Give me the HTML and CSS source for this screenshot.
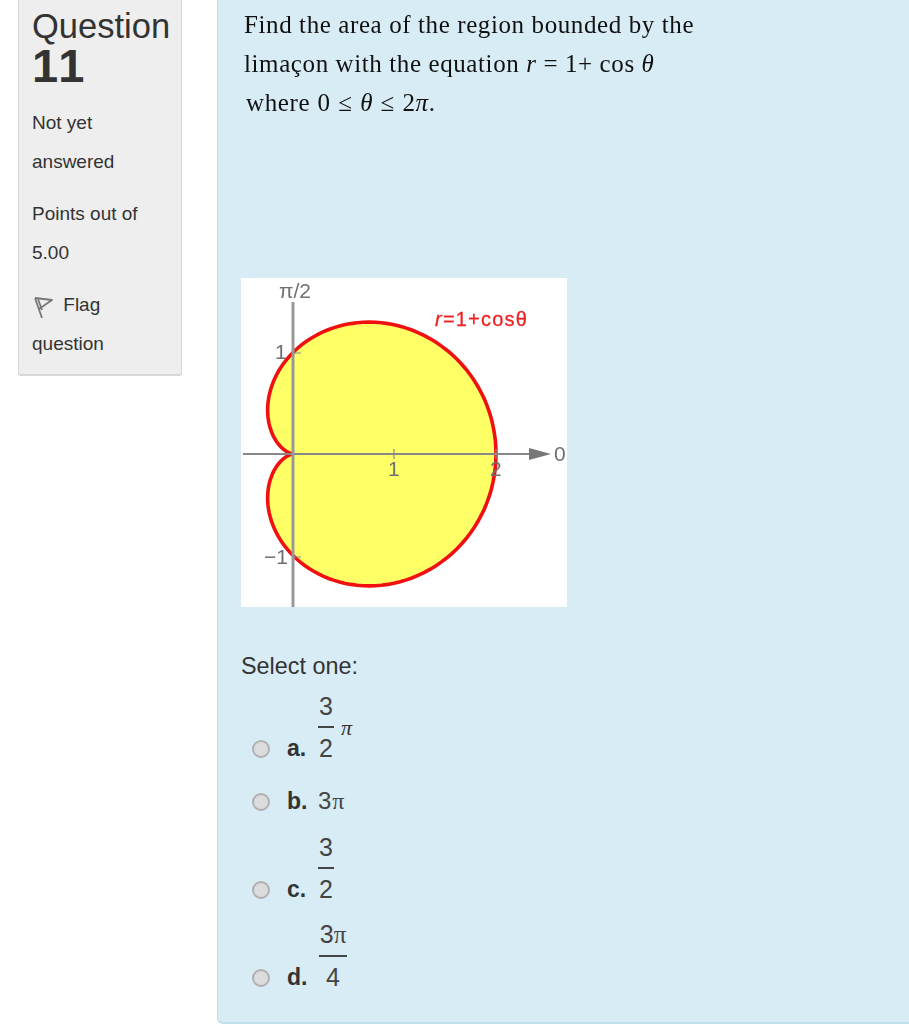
FILE: index.html
```html
<!DOCTYPE html>
<html lang="en">
<head>
  <meta charset="UTF-8" />
  <title>Question 11</title>
  <link rel="stylesheet" href="styles.css">
</head>
<body>

  <div class="info">
    <h3 class="qno">Question <span class="qnum">11</span></h3>
    <div class="state">Not yet answered</div>
    <div class="grade">Points out of 5.00</div>
    <div class="flag">
      <svg class="flag-icon" width="20" height="24" viewBox="0 0 20 24">
        <path d="M2 2 L9 22 M5 3 L9 14 M2 2 L19 4 L6 13" fill="none" stroke="#777" stroke-width="1.8" stroke-linejoin="round" />
      </svg>
      Flag question
    </div>
  </div>

  <div class="content">
    <div class="qtext">
      <p class="line">Find the area of the region bounded by the</p>
      <p class="line">limaçon with the equation <i>r</i> = 1+ cos <i>θ</i></p>
      <p class="line line-where">where 0 ≤ <i>θ</i> ≤ 2<i>π</i>.</p>
    </div>

    <svg class="graph" width="326" height="329" viewBox="0 0 326 329">
      <rect width="326" height="329" fill="#fff" />
      <path id="limacon" fill="#ffff66" stroke="#f01010" stroke-width="3.6" />
      <path d="M2 176 H292" stroke="#888" stroke-width="2" />
      <path d="M52 24 V329" stroke="#999" stroke-width="3" />
      <path d="M153 171 V181 M255 171 V181 M52 75 H60 M52 279 H60" stroke="#888" stroke-width="1.2" />
      <path d="M288 170 L310 176 L288 182 Z" fill="#777" />
      <text class="axis" x="38" y="20">π/2</text>
      <text class="axis" x="313" y="183">0</text>
      <text class="axis" x="147" y="198">1</text>
      <text class="axis" x="249" y="198">2</text>
      <text class="axis" x="34" y="81">1</text>
      <text class="axis" x="23" y="286">−1</text>
      <text class="curve-label" x="194" y="48"><tspan class="curve-r">r</tspan>=1+cosθ</text>
    </svg>

    <div class="prompt">Select one:</div>

    <div class="answers">
      <label class="answer answer-a">
        <span class="radio"></span>
        <b class="letter">a.</b>
        <span class="frac"><span class="num">3</span><span class="den">2</span></span>
        <span class="pi pi-raised">π</span>
      </label>
      <label class="answer answer-b">
        <span class="radio"></span>
        <b class="letter">b.</b>
        <span class="plain">3<span class="pi">π</span></span>
      </label>
      <label class="answer answer-c">
        <span class="radio"></span>
        <b class="letter">c.</b>
        <span class="frac"><span class="num">3</span><span class="den">2</span></span>
      </label>
      <label class="answer answer-d">
        <span class="radio"></span>
        <b class="letter">d.</b>
        <span class="frac frac-wide"><span class="num">3<span class="pi">π</span></span><span class="den">4</span></span>
      </label>
    </div>
  </div>

  <script src="graph.js"></script>
</body>
</html>
```

FILE: styles.css
```css
html, body {
  height: 1024px;
}

body {
  margin: 0;
  display: flex;
  align-items: flex-start;
  gap: 35px;
  padding-left: 18px;
  overflow: hidden;
  background: #fff;
  color: #333;
  font-family: "Liberation Sans", Arial, sans-serif;
  font-size: 19px;
  line-height: 39px;
}

/* left column */
.info {
  flex: none;
  box-sizing: border-box;
  width: 164px;
  height: 376px;
  padding: 6px 12px 0 13px;
  background: #eeeeee;
  border: 1px solid #d8d8d8;
  border-top: 0;
  border-bottom-width: 2px;
  border-radius: 0 0 3px 3px;
}

.qno {
  margin: 0 0 17px;
  font-size: 34.5px;
  font-weight: normal;
  line-height: 41px;
}

.qnum {
  display: block;
  margin-top: -2px;
  font-size: 47px;
  font-weight: bold;
  font-kerning: none;
}

.state, .grade {
  margin-bottom: 13px;
}

.flag-icon {
  margin: 0 5px -9px 1px;
  filter: blur(0.4px);
}

/* question */
.content {
  flex: none;
  box-sizing: border-box;
  width: 720px;
  height: 1024px;
  padding: 5px 23px 0;
  background: #d8ecf6;
  border: 1px solid #c0dfea;
  border-top: 0;
  border-bottom-width: 2px;
  border-radius: 0 0 6px 6px;
}

.qtext {
  height: 273px;
  font-family: "Liberation Serif", "Times New Roman", serif;
  font-size: 25px;
  letter-spacing: 0.6px;
  color: #111;
  filter: blur(0.4px);
}

.line {
  margin: 0 0 0 3px;
}

.line-where {
  margin-left: 5px;
  word-spacing: 0.7px;
}

.graph {
  display: block;
  filter: blur(0.5px);
}

.axis {
  font-family: "Liberation Sans", Arial, sans-serif;
  font-size: 21px;
  fill: #707070;
}

.curve-label {
  font-family: "Liberation Sans", Arial, sans-serif;
  font-size: 20px;
  letter-spacing: 1.2px;
  fill: #ee2222;
  stroke: #ee2222;
  stroke-width: 0.3px;
}

.curve-r {
  font-style: italic;
}

.prompt {
  margin-top: 39px;
  font-size: 23.4px;
  line-height: 40px;
}

.answers {
  margin-left: 11px;
}

.answer {
  display: flex;
  align-items: flex-end;
  font-size: 23px;
  line-height: 40px;
}

.answer-a { height: 80px; margin-top: 2px; }
.answer-b { height: 53px; }
.answer-c { height: 88px; }
.answer-d { height: 88px; }

.radio {
  flex: none;
  box-sizing: border-box;
  width: 18px;
  height: 18px;
  margin-bottom: 10px;
  background: #dcdcdc;
  border: 2px solid #b0b0b0;
  border-radius: 50%;
}

.letter {
  width: 31px;
  margin-left: 17px;
}

.frac {
  display: inline-flex;
  flex-direction: column;
  align-items: center;
  width: 16px;
  color: #444;
  font-size: 25px;
  line-height: 40px;
}

.frac-wide {
  width: 28px;
  margin-left: 1px;
}

.num {
  border-bottom: 2px solid #444;
  align-self: stretch;
  text-align: center;
}

.plain {
  color: #444;
  font-size: 24px;
  letter-spacing: 1px;
}

.pi {
  font-family: "Liberation Serif", "Times New Roman", serif;
}

.pi-raised {
  align-self: flex-end;
  margin: 0 0 26px 7px;
  font-size: 22px;
  font-style: italic;
  line-height: 28px;
}
```

FILE: graph.js
```js
// r = 1 + cos(theta), origin and scale in svg pixels
const originX = 52;
const originY = 176;
const unit = 101.5;

let d = '';
for (let deg = 0; deg <= 360; deg += 2) {
  const t = deg * Math.PI / 180;
  const r = 1 + Math.cos(t);
  const x = originX + unit * r * Math.cos(t);
  const y = originY - unit * r * Math.sin(t);
  d += (deg === 0 ? 'M' : 'L') + x.toFixed(1) + ' ' + y.toFixed(1) + ' ';
}
document.getElementById('limacon').setAttribute('d', d + 'Z');
```
